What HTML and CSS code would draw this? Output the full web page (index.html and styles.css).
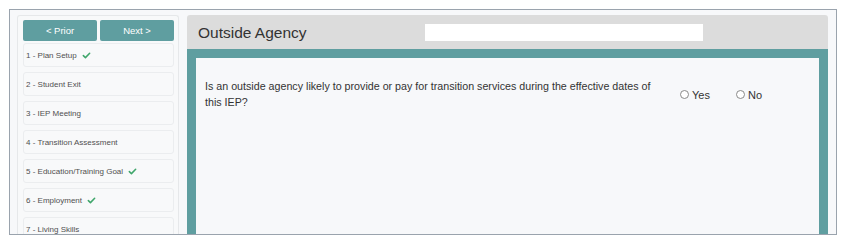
FILE: index.html
```html
<!DOCTYPE html>
<html>
<head>
<meta charset="utf-8">
<link rel="stylesheet" href="styles.css">
</head>
<body>
<div class="frame">
  <aside class="sidebar">
    <div class="nav-buttons">
      <button class="nav-btn">&lt; Prior</button>
      <button class="nav-btn">Next &gt;</button>
    </div>
    <ul class="steps">
      <li class="step">1 - Plan Setup <svg class="check" viewBox="0 0 12 10"><path d="M1.5 5.2 L4.5 8 L10.5 1.8" /></svg></li>
      <li class="step">2 - Student Exit</li>
      <li class="step">3 - IEP Meeting</li>
      <li class="step">4 - Transition Assessment</li>
      <li class="step">5 - Education/Training Goal <svg class="check" viewBox="0 0 12 10"><path d="M1.5 5.2 L4.5 8 L10.5 1.8" /></svg></li>
      <li class="step">6 - Employment <svg class="check" viewBox="0 0 12 10"><path d="M1.5 5.2 L4.5 8 L10.5 1.8" /></svg></li>
      <li class="step">7 - Living Skills</li>
    </ul>
  </aside>
  <main class="main">
    <header class="main-header">
      <h1 class="title">Outside Agency</h1>
      <div class="header-field"></div>
    </header>
    <div class="teal">
      <div class="card">
        <div class="question-row">
          <p class="question">Is an outside agency likely to provide or pay for transition services during the effective dates of this IEP?</p>
          <div class="options">
            <label class="opt"><span class="radio"></span>Yes</label>
            <label class="opt"><span class="radio"></span>No</label>
          </div>
        </div>
      </div>
    </div>
  </main>
</div>
</body>
</html>
```
FILE: styles.css
```css
html, body {
  margin: 0;
  padding: 0;
  background: #ffffff;
  font-family: "Liberation Sans", Arial, sans-serif;
}
body {
  padding: 9px 0 0 9px;
}
.frame {
  box-sizing: border-box;
  width: 828px;
  height: 226px;
  border: 1px solid #9aa3ad;
  background: #f7f8fa;
  display: flex;
  gap: 8px;
  padding: 5px 0 0 7px;
  overflow: hidden;
}
.sidebar {
  box-sizing: border-box;
  width: 162px;
  flex: none;
  border: 1px solid #e6e8ea;
  border-bottom: none;
  border-radius: 3px 3px 0 0;
  background: #f8f9fa;
  padding: 4px 4px 0 5px;
}
.nav-buttons {
  display: flex;
  gap: 3px;
}
.nav-btn {
  width: 74px;
  height: 21px;
  border: none;
  border-radius: 2px;
  background: #5f9ea0;
  color: #ffffff;
  font-family: "Liberation Sans", Arial, sans-serif;
  font-size: 9.5px;
  padding: 0;
}
.steps {
  list-style: none;
  margin: 2px 0 0 0;
  padding: 0;
  display: flex;
  flex-direction: column;
  gap: 5px;
}
.step {
  box-sizing: border-box;
  width: 151px;
  height: 24px;
  border: 1px solid #ebedef;
  border-radius: 3px;
  background: #f8f9fa;
  font-size: 8px;
  color: #505050;
  display: flex;
  align-items: center;
  padding-left: 2px;
  gap: 5px;
}
.check {
  width: 9px;
  height: 7px;
  fill: none;
  stroke: #3fa66b;
  stroke-width: 2.2;
  stroke-linecap: round;
  stroke-linejoin: round;
}
.main {
  width: 641px;
  flex: none;
  display: flex;
  flex-direction: column;
}
.main-header {
  height: 34px;
  background: #dcdcdc;
  border-radius: 3px 3px 0 0;
  display: flex;
  align-items: center;
  padding-left: 11px;
}
.title {
  margin: 0;
  font-weight: normal;
  font-size: 15.5px;
  color: #333;
  width: 227px;
  margin-top: 2px;
}
.header-field {
  width: 278px;
  height: 17px;
  background: #ffffff;
  margin-top: 1px;
}
.teal {
  flex: 1;
  background: #5f9ea0;
  padding: 9px 9px 0 9px;
}
.card {
  height: 100%;
  background: #f7f8fa;
  padding: 20px 0 0 9px;
  box-sizing: border-box;
}
.question-row {
  display: flex;
}
.question {
  margin: 0;
  width: 460px;
  font-size: 10.7px;
  line-height: 16px;
  color: #333;
}
.options {
  display: flex;
  gap: 14px;
  margin-left: 15px;
  margin-top: 1px;
}
.opt {
  display: flex;
  align-items: center;
  gap: 3px;
  font-size: 11px;
  color: #333;
  width: 42px;
}
.radio {
  width: 7px;
  height: 7px;
  border: 1px solid #8a8a8a;
  border-radius: 50%;
  background: #fff;
}
```
